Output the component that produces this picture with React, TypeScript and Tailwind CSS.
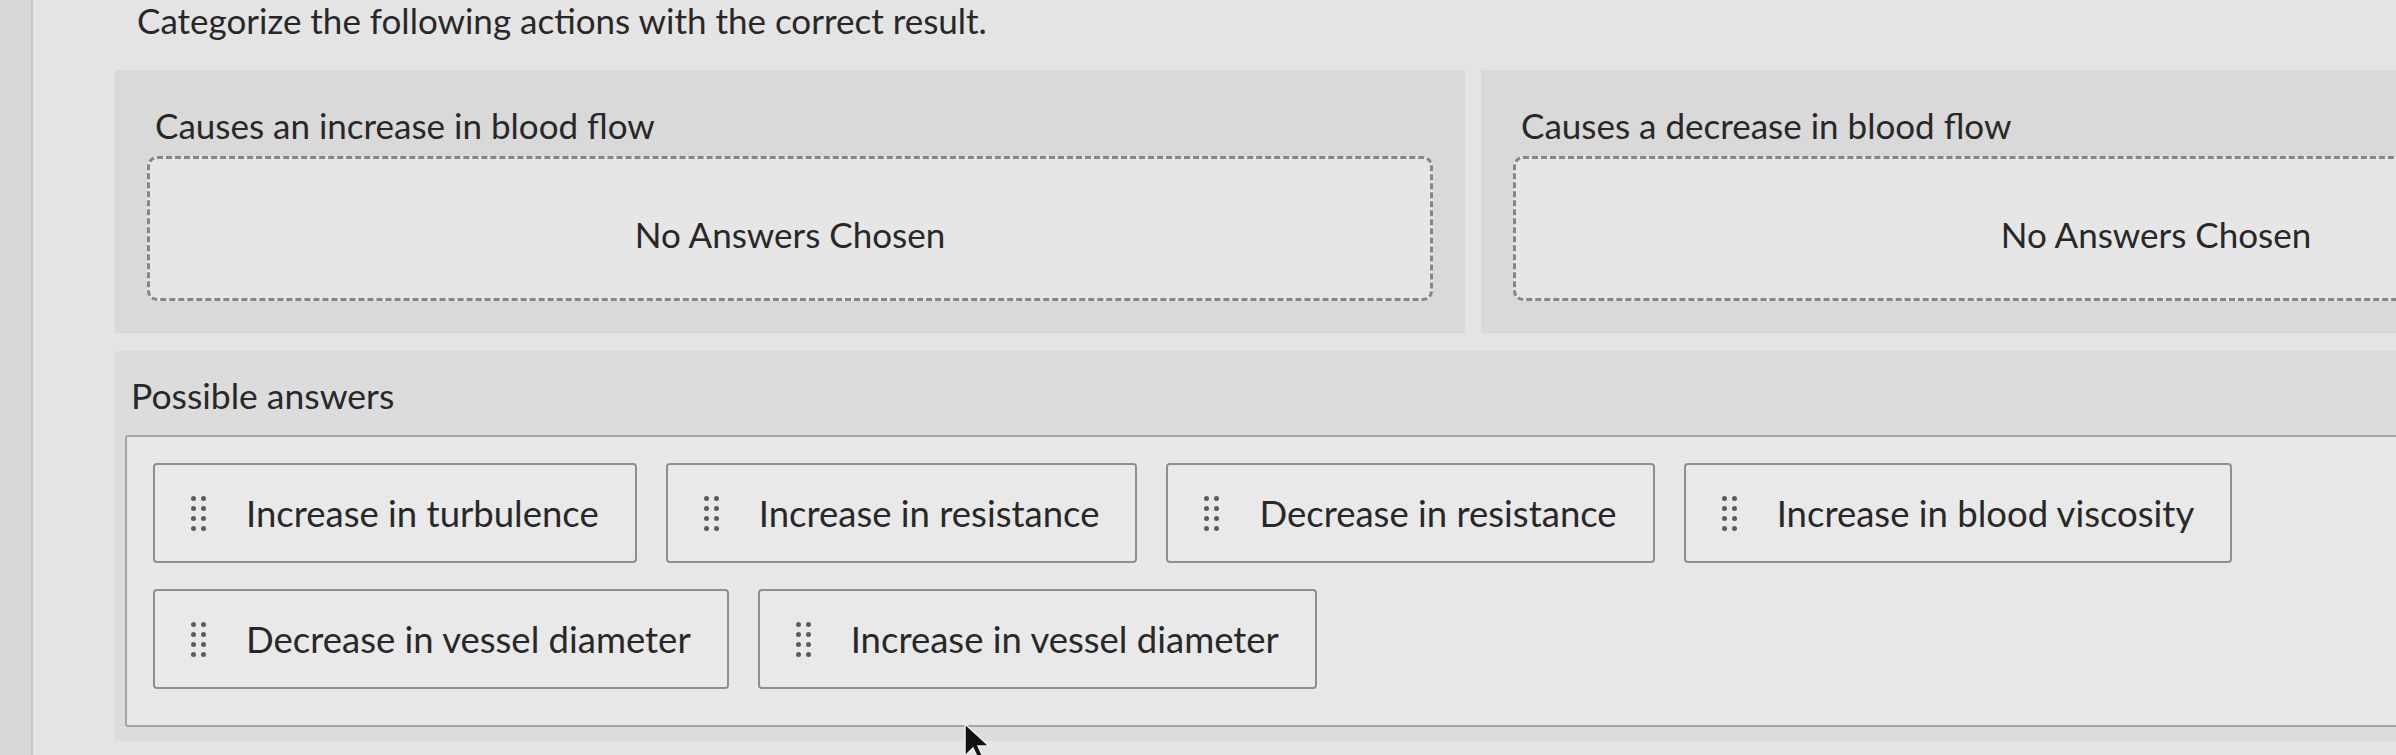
import { ReactNode } from 'react'

const font = { fontFamily: 'Lato, "Open Sans", sans-serif' }

const rowOne = ['Increase in turbulence', 'Increase in resistance', 'Decrease in resistance', 'Increase in blood viscosity']
const rowTwo = ['Decrease in vessel diameter', 'Increase in vessel diameter']

function DragHandle() {
  return (
    <div className="grid grid-cols-2 gap-x-[5px] gap-y-[5px] w-[15px]">
      {Array.from({ length: 8 }).map((_, i) => (
        <span key={i} className="w-[5px] h-[5px] rounded-full bg-[#5c5c5c]" />
      ))}
    </div>
  )
}

function Chip({ label }: { label: string }) {
  return (
    <div className="flex items-center h-[100px] pl-[36px] pr-[36px] border-2 border-[#8f8f8f] rounded-[4px] bg-[#e9e9e9] shrink-0">
      <DragHandle />
      <span className="ml-[40px] text-[36.5px] text-[#282828] whitespace-nowrap">{label}</span>
    </div>
  )
}

function Category({ title, children }: { title: string; children?: ReactNode }) {
  return (
    <div className="w-[1350px] shrink-0 bg-[#d9d9d9] pt-[34px] pb-[32px] px-[32px]">
      <div className="pl-[8px] h-[42px] leading-[42px] text-[35px] text-[#282828]">{title}</div>
      <div className="mt-[10px] h-[145px] rounded-[10px] border-[3px] border-dashed border-[#868686] bg-[#e6e6e6] flex items-center justify-center">
        <span className="text-[35px] text-[#282828] mt-[12px]">{children ?? 'No Answers Chosen'}</span>
      </div>
    </div>
  )
}

export default function App() {
  return (
    <div className="relative w-screen h-[755px] overflow-hidden bg-[#e4e4e4] flex" style={font}>
      {/* left window edge */}
      <div className="w-[33px] shrink-0 bg-[#d7d7d7] border-r-2 border-[#c6c6c6]" />

      <div className="w-[2860px] shrink-0 pl-[82px]">
        <h1 className="pl-[22px] h-[42px] leading-[40px] text-[35px] text-[#282828]">
          Categorize the following actions with the correct result.
        </h1>

        {/* Categories */}
        <div className="mt-[28px] flex gap-[16px]">
          <Category title="Causes an increase in blood flow" />
          <Category title="Causes a decrease in blood flow" />
        </div>

        {/* Possible answers */}
        <div className="mt-[18px] bg-[#dcdcdc] pt-[24px] pb-[14px] pl-[10px]">
          <div className="pl-[6px] h-[42px] leading-[42px] text-[35.5px] text-[#282828]">Possible answers</div>
          <div className="mt-[18px] w-[2700px] border-2 border-[#a4a4a4] rounded-[3px] bg-[#e8e8e8] pt-[26px] pb-[36px] px-[26px] flex flex-col gap-[26px]">
            <div className="flex gap-[29px]">
              {rowOne.map((a) => (
                <Chip key={a} label={a} />
              ))}
            </div>
            <div className="flex gap-[29px]">
              {rowTwo.map((a) => (
                <Chip key={a} label={a} />
              ))}
            </div>
          </div>
        </div>
      </div>

      {/* mouse pointer */}
      <svg className="absolute left-[962px] top-[722px]" width="30" height="40" viewBox="0 0 30 40">
        <path d="M3 2 L3 34 L11 26 L17 39 L22 37 L16 24 L27 24 Z" fill="#111" stroke="#eee" strokeWidth="1.5" />
      </svg>
    </div>
  )
}
